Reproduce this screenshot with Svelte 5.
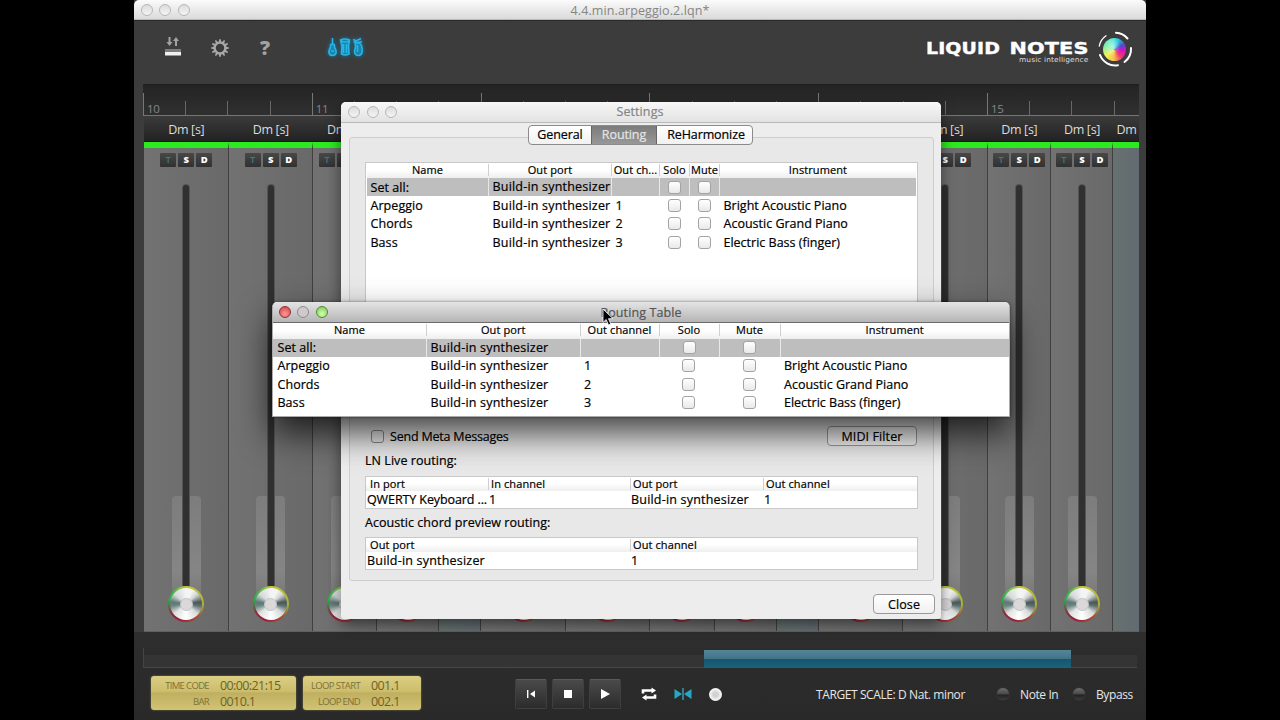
<script>
  const bars = [10, 11, 12, 13, 14, 15];

  // one entry per chord, w = width on the time line
  const chords = [
    { w: 84.5 }, { w: 84.5 }, { w: 64 }, { w: 61.5 }, { w: 42.5, rest: true },
    { w: 85 }, { w: 84 }, { w: 64.5 }, { w: 62 }, { w: 42.5, rest: true },
    { w: 84 }, { w: 84.5 }, { w: 63.5 }, { w: 62 }, { w: 27, rest: true, label: "Dm" },
  ];

  const columns = ["Name", "Out port", "Out channel", "Solo", "Mute", "Instrument"];
  const shortColumns = ["Name", "Out port", "Out ch...", "Solo", "Mute", "Instrument"];

  const tracks = [
    { name: "Set all:", channel: "", instrument: "", selected: true },
    { name: "Arpeggio", channel: "1", instrument: "Bright Acoustic Piano" },
    { name: "Chords", channel: "2", instrument: "Acoustic Grand Piano" },
    { name: "Bass", channel: "3", instrument: "Electric Bass (finger)" },
  ];

  const teeth = [0, 30, 60, 90, 120, 150, 180, 210, 240, 270, 300, 330];
</script>

{#snippet table(heads)}
  <div class="row head">
    {#each heads as head}<span>{head}</span>{/each}
  </div>
  {#each tracks as track}
    <div class="row" class:selected={track.selected}>
      <span>{track.name}</span>
      <span class="port">Build-in synthesizer</span>
      <span class="channel">{track.channel}</span>
      <span class="check"><i class="box"></i></span>
      <span class="check"><i class="box"></i></span>
      <span class="instrument">{track.instrument}</span>
    </div>
  {/each}
{/snippet}

<div class="desktop">
  <div class="app">
    <div class="titlebar main-title">
      <div class="lights"><i></i><i></i><i></i></div>
      4.4.min.arpeggio.2.lqn*
    </div>

    <header>
      <svg class="export" width="18" height="20" viewBox="0 0 18 20">
        <path d="M4.500 0h2v5h2l-3 4-3-4h2zM13 9h-2V4H9l3-4 3 4h-2z" fill="#a2a2a2" />
        <rect x="1" y="12" width="16" height="3" fill="#7c7c7c" />
        <rect x="1" y="15" width="16" height="3.500" fill="#f0f0f0" />
      </svg>
      <svg class="gear" width="18" height="18" viewBox="-9 -9 18 18">
        {#each teeth as angle}
          <path d="M-1.500 -5.500 -.5 -9h1L1.500 -5.500z" fill="#a8a8a8" transform="rotate({angle})" />
        {/each}
        <circle r="5.300" fill="none" stroke="#a8a8a8" stroke-width="2.200" />
      </svg>
      <span class="help">?</span>
      <svg class="band" width="36" height="20" viewBox="0 0 36 20">
        <g fill="#1686ae" stroke="#28b4e4" stroke-width="1.600" stroke-linejoin="round">
          <path d="M4.500 1v7M4.500 7c-2.500 0-2 2-2 3.500C-.2 14 .5 18.500 4.500 18.500S9.200 14 6.500 10.500C6.500 9 7 7 4.500 7zM3 14h3" />
          <path d="M12.500 3q4.500-2 9 0l-1 6 .5 8q-4 2-7.500 0l.5-8zM12.500 4q4.500 2 9 0M15.500 7v9M18.500 7v9" />
          <path d="M25 2.500l4 1.500M33 1.500l-4 2M25.500 4.500q4 2 8.500 0M27 6q1 3 0 6c-1 4 0 6.500 3.500 6.500s4-3.500 3.500-7.500-1.500-5-4-5zM29.500 8v7" />
        </g>
      </svg>
      <svg class="logo" width="210" height="42" viewBox="0 0 210 42">
        <text x="0" y="24" class="brand" textLength="74" lengthAdjust="spacingAndGlyphs">LIQUID</text>
        <text x="83.500" y="24" class="brand" textLength="79" lengthAdjust="spacingAndGlyphs">NOTES</text>
        <text x="93" y="32" class="motto" textLength="69.500" lengthAdjust="spacingAndGlyphs">music intelligence</text>
      </svg>
      <div class="disc">
        <svg width="36" height="36" viewBox="-18 -18 36 36">
          <g fill="none" stroke="#fff" stroke-linecap="round">
            <path d="M-15.700 -3A16 16 0 0 1 -9 -13.200" stroke-width="1.300" />
            <path d="M1 -16.200A16.300 16.300 0 0 1 12.500 -10.500" stroke-width="2" />
            <path d="M16 -1A16.200 16.200 0 0 1 9.500 13" stroke-width="2" />
            <path d="M3 16.200A16.200 16.200 0 0 1 -15 6" stroke-width="2" />
          </g>
        </svg>
        <i></i>
      </div>
    </header>

    <div class="ruler">
      {#each bars as bar}
        <div class="bar"><b>{bar}</b><i></i><i></i><i></i></div>
      {/each}
    </div>

    <div class="mixer">
      {#each chords as chord}
        <div class="strip" class:rest={chord.rest} style="width: {chord.w}px">
          <div class="chord">{chord.label ?? (chord.rest ? "" : "Dm [s]")}</div>
          <div class="lane">
            {#if !chord.rest}
              <div class="tsd"><b class="t">T</b><b>S</b><b>D</b></div>
              <div class="fader">
                <div class="range"></div>
                <div class="slot"></div>
                <div class="knob"><i></i></div>
              </div>
            {/if}
          </div>
        </div>
      {/each}
    </div>

    <div class="navigator"><div class="view"></div></div>

    <footer>
      <div class="lcd time">
        <small>TIME CODE</small><span>00:00:21:15</span>
        <small>BAR</small><span>0010.1</span>
      </div>
      <div class="lcd loop">
        <small>LOOP START</small><span>001.1</span>
        <small>LOOP END</small><span>002.1</span>
      </div>
      <div class="transport">
        <button aria-label="Rewind"><svg width="10" height="10"><path d="M1 1h1.400v8H1zM9 1.500v7L4 5z" fill="#fff" /></svg></button>
        <button aria-label="Stop"><svg width="10" height="10"><path d="M1 1h8v8H1z" fill="#fff" /></svg></button>
        <button aria-label="Play"><svg width="10" height="10"><path d="M1 0l9 5-9 5z" fill="#fff" /></svg></button>
      </div>
      <svg class="cycle" width="16" height="14" viewBox="0 0 16 14">
        <path d="M2 6.500V3.500H11M14 7.500v3H5" fill="none" stroke="#fff" stroke-width="2.600" />
        <path d="M10.500 .5v6l4.500-3zM5.500 7.500v6l-4.500-3z" fill="#fff" />
      </svg>
      <svg class="snap" width="18" height="14" viewBox="0 0 18 14">
        <path d="M.5 2 8 7 .5 12zM17.500 2 10 7l7.500 5z" fill="#27a7c4" />
        <path d="M9 1v12" stroke="#35b6d2" stroke-width="1.200" />
      </svg>
      <i class="record"></i>
      <span class="scale">TARGET SCALE: D Nat. minor</span>
      <i class="led"></i><span class="note-in">Note In</span>
      <i class="led"></i><span>Bypass</span>
    </footer>
  </div>

  <section class="window settings">
    <div class="titlebar">
      <div class="lights"><i></i><i></i><i></i></div>
      Settings
    </div>
    <div class="tabs">
      <span>General</span><span class="active">Routing</span><span>ReHarmonize</span>
    </div>
    <div class="panel">
      <div class="table tracks">{@render table(shortColumns)}</div>
      <div class="meta">
        <i class="box"></i><span>Send Meta Messages</span>
        <button class="aqua">MIDI Filter</button>
      </div>
      <p>LN Live routing:</p>
      <div class="table live">
        <div class="row head"><span>In port</span><span>In channel</span><span>Out port</span><span>Out channel</span></div>
        <div class="row"><span class="keyboard">QWERTY Keyboard ...</span><span>1</span><span class="port">Build-in synthesizer</span><span>1</span></div>
      </div>
      <p class="preview-label">Acoustic chord preview routing:</p>
      <div class="table live preview">
        <div class="row head"><span>Out port</span><span>Out channel</span></div>
        <div class="row"><span class="port">Build-in synthesizer</span><span>1</span></div>
      </div>
    </div>
    <button class="aqua close">Close</button>
  </section>

  <section class="window routing">
    <div class="titlebar">
      <div class="lights"><i></i><i></i><i></i></div>
      Routing Table
    </div>
    <div class="table tracks">{@render table(columns)}</div>
  </section>

  <svg class="cursor" width="13" height="19" viewBox="0 0 13 19">
    <path d="M1 1v13.500l3.200-3 2.300 5.500 2.300-1-2.300-5.300H11z" fill="#000" stroke="#fff" stroke-width=".8" />
  </svg>
</div>

<style>
  :global(body) {
    margin: 0;
    background: #000;
  }

  .desktop {
    position: relative;
    width: 1280px;
    height: 720px;
    overflow: hidden;
    background: #000;
    font-family: "Open Sans", "Noto Sans", sans-serif;
    font-size: 12.5px;
    letter-spacing: 0.1px;
    color: #000;
  }

  .desktop * {
    box-sizing: border-box;
  }

  .app {
    display: flex;
    flex-direction: column;
    width: 1012px;
    height: 720px;
    margin: 0 auto;
    background: linear-gradient(#3c3c3c 632px, #2e2e2e 632px, #292929);
  }

  .titlebar {
    display: flex;
    align-items: center;
    justify-content: center;
    height: 21px;
    flex: none;
    position: relative;
    color: #858585;
    background: linear-gradient(#f8f8f8, #e2e2e2);
    border-bottom: 1px solid #b9b9b9;
  }

  .main-title {
    height: 20px;
    padding-top: 2px;
    background: linear-gradient(#fbfbfb, #dadada);
    border-radius: 5px 5px 0 0;
  }

  .lights {
    position: absolute;
    top: 4px;
    left: 6.5px;
    display: flex;
    gap: 6.5px;
  }

  .lights i {
    width: 12px;
    height: 12px;
    border: 1.5px solid #b7b7b7;
    border-radius: 50%;
    background: linear-gradient(#dcdcdc, #f4f4f4);
  }

  header {
    display: flex;
    align-items: flex-start;
    height: 64px;
    flex: none;
    border-top: 1px solid #2a2a2a;
  }

  .export {
    margin: 16px 0 0 30px;
  }

  .gear {
    margin: 18px 0 0 28.5px;
  }

  .help {
    margin: 13px 0 0 31.5px;
    width: 12px;
    font-size: 20px;
    line-height: 27px;
    font-weight: 800;
    color: #a2a2a2;
  }

  .band {
    margin: 16px 0 0 56px;
    filter: drop-shadow(0 0 2px #0d7fae);
  }

  .logo {
    margin: 9px -38px 0 562px;
    flex: none;
  }

  .brand {
    fill: #fff;
    stroke: #fff;
    stroke-width: 0.4px;
    font: bold 16px "DejaVu Sans", sans-serif;
  }

  .motto {
    fill: #ddd;
    font: 7px "DejaVu Sans", sans-serif;
  }

  .disc {
    display: grid;
    place-items: center;
    margin: 10px 0 0 -1.5px;
    width: 36px;
    height: 36px;
    flex: none;
  }

  .disc > * {
    grid-area: 1 / 1;
  }

  .disc i {
    width: 23px;
    height: 23px;
    border-radius: 50%;
    background:
      radial-gradient(circle at 38% 38%, #fff8 0, #fff0 45%),
      conic-gradient(from 20deg, #2ec7e6, #4a50c8 40deg, #d810c0 75deg, #ee3a70 120deg, #f6c34a 165deg, #f2f25a 215deg, #64eca0 275deg, #55e8d0 330deg, #2ec7e6);
  }

  .ruler {
    display: flex;
    height: 32px;
    flex: none;
    margin: 0 7px 0 9px;
    overflow: hidden;
    padding-top: 8px;
    background: linear-gradient(#242424, #303030);
    border-bottom: 1px solid #757575;
    border-top: 1px solid #1d1d1d;
  }

  .bar {
    display: flex;
    align-items: flex-end;
    position: relative;
    width: 168.8px;
    flex: none;
    border-left: 1px solid #777;
  }

  .bar b {
    position: absolute;
    left: 3px;
    top: 8px;
    font-size: 11.5px;
    line-height: 16px;
    font-weight: 400;
    letter-spacing: -0.3px;
    color: #868686;
  }

  .bar i {
    width: 42.2px;
    height: 14px;
    border-right: 1px solid #686868;
  }

  .mixer {
    display: flex;
    height: 516px;
    flex: none;
    margin: 0 7px 0 10px;
    overflow: hidden;
    border-bottom: 1px solid #606060;
  }

  .strip {
    display: flex;
    flex-direction: column;
    flex: none;
  }

  .chord {
    height: 26px;
    flex: none;
    line-height: 27px;
    text-align: center;
    color: #dcdcdc;
    background: linear-gradient(#3b3b3b, #222);
    border-bottom: 1px solid #161616;
    letter-spacing: -0.3px;
  }

  .lane {
    display: flex;
    flex-direction: column;
    align-items: center;
    flex: 1;
    padding: 5px 0 0 1px;
    border-top: 6px solid #2bea20;
    border-right: 1px solid #404040;
    background: linear-gradient(90deg, #727272, #696969);
  }

  .rest .lane {
    background: linear-gradient(90deg, #66716f, #626b72);
  }

  .tsd {
    display: flex;
    gap: 2px;
  }

  .tsd b {
    width: 16px;
    height: 14px;
    font-size: 9.5px;
    line-height: 13px;
    font-weight: 800;
    text-align: center;
    color: #fff;
    background: linear-gradient(#484848, #313131);
    border-radius: 1px;
  }

  .tsd .t {
    color: #397a7c;
    font-weight: 600;
  }

  .fader {
    display: grid;
    justify-items: center;
    grid-template-rows: 311px 90px 36px;
    width: 36px;
    margin-top: 18px;
  }

  .slot {
    grid-area: 1 / 1 / 3 / 2;
    width: 6px;
    background: #303030;
    border-radius: 3px 3px 0 0;
    box-shadow: 0 0 0 1px #555;
  }

  .range {
    grid-area: 2 / 1 / 4 / 2;
    width: 29px;
    height: 108px;
    border-radius: 4px 4px 0 0;
    background: linear-gradient(#7d7d7d, #858585 70%, #747474);
  }

  .knob {
    grid-area: 3 / 1;
    display: grid;
    place-items: center;
    width: 36px;
    height: 36px;
    border-radius: 50%;
    background:
      conic-gradient(from 0deg, #f4f4f4 0 25deg, #d0d4d3 50deg, #4a5658 82deg, #5c7070 98deg, #d9dcdc 130deg, #fff 180deg, #dfe3e2 230deg, #6c8480 262deg, #5d7876 278deg, #d5d9d8 310deg, #f4f4f4) padding-box,
      conic-gradient(#c3c83b, #a8b43a 90deg, #a35334 135deg, #9c2038 200deg, #8a2c3c 240deg, #2ca844 280deg, #3cb94a 310deg, #c3c83b) border-box;
    border: 2px solid transparent;
  }

  .knob i {
    width: 13px;
    height: 13px;
    border-radius: 50%;
    background: #dcd8da;
    border: 1px solid #bfc6c5;
  }

  .navigator {
    height: 20px;
    flex: none;
    margin: 16px 9px 0;
    padding: 2px 0 0 560px;
    border-bottom: 1px solid #484848;
    border-left: 1px solid #444;
    background: linear-gradient(#2d2d2d 35%, #343434 36%);
  }

  .view {
    width: 367px;
    height: 18px;
    background: linear-gradient(#568698, #417487 48%, #155771 52%, #1e617b);
  }

  footer {
    display: flex;
    align-items: center;
    height: 52px;
    color: #e6e6e6;
    font-size: 12px;
    letter-spacing: -0.4px;
    padding-left: 17px;
    white-space: nowrap;
  }

  .lcd {
    display: grid;
    grid-template-rows: 16px 16px;
    align-items: center;
    justify-items: end;
    height: 34px;
    margin-top: -2px;
    padding-top: 1px;
    border-radius: 3px;
    background: linear-gradient(#dccf83, #cdbd6c 45%, #c0af60 50%, #d2c475);
    box-shadow: 0 0 2px #8d8145;
    color: #6d6226;
  }

  .lcd small {
    font-size: 9.5px;
    color: #7d7137;
    letter-spacing: -0.65px;
  }

  .lcd span {
    justify-self: start;
    font-size: 12.5px;
    line-height: 15px;
    letter-spacing: -0.6px;
  }

  .time {
    width: 145px;
    grid-template-columns: 58px 1fr;
    column-gap: 11px;
  }

  .loop {
    width: 118px;
    margin-left: 7px;
    grid-template-columns: 57px 1fr;
    column-gap: 11px;
  }

  .transport {
    display: flex;
    gap: 5px;
    margin-left: 94px;
  }

  .transport button {
    display: grid;
    place-items: center;
    width: 32px;
    height: 30px;
    padding: 0;
    border: 1px solid #3f3f3f;
    border-top-color: #5a5a5a;
    border-radius: 2px;
    background: linear-gradient(#4a4a4a, #2c2c2c);
  }

  .cycle {
    margin-left: 20px;
  }

  .snap {
    margin-left: 17px;
  }

  .record {
    width: 13px;
    height: 13px;
    margin-left: 17px;
    border-radius: 50%;
    background: radial-gradient(#d2d2d2 25%, #f4f4f4 60%);
  }

  .scale {
    width: 149px;
    margin-left: 94px;
  }

  .led {
    width: 12px;
    height: 12px;
    margin: 0 11px 0 32px;
    border-radius: 50%;
    background: linear-gradient(#6c6c6c, #4d4d4d 45%, #242424 60%, #3c3c3c);
    box-shadow: 0 0 1px #666;
  }

  .note-in {
    width: 37px;
  }

  .note-in + .led {
    margin-left: 16px;
  }

  .window {
    position: absolute;
    background: #ededed;
    border-radius: 5px 5px 0 0;
    /* Lucida-like weight */
    -webkit-text-stroke: 0.2px;
  }

  .settings {
    isolation: isolate;
    left: 341px;
    top: 102px;
    width: 600px;
    height: 517px;
    border-radius: 5px 5px 3px 3px;
    box-shadow: 0 5px 14px rgba(0, 0, 0, 0.5);
  }

  .window .titlebar {
    border-radius: 5px 5px 0 0;
    padding: 0 2px 1px 0;
  }

  .settings .lights {
    left: 7px;
  }

  .tabs {
    display: flex;
    justify-content: center;
    width: 225px;
    height: 20px;
    margin: 2px 0 0 187px;
    position: relative;
    border: 1px solid #8b8b8b;
    border-radius: 4px;
    overflow: hidden;
    background: linear-gradient(#fff, #f1f1f1);
    z-index: 1;
  }

  .tabs span {
    width: 62px;
    line-height: 18px;
    text-align: center;
    letter-spacing: -0.1px;
  }

  .tabs .active {
    width: 66px;
    color: #e5e5e5;
    background: linear-gradient(#7b7b7b, #989898);
    border-left: 1px solid #666;
    border-right: 1px solid #666;
  }

  .tabs span:last-child {
    flex: 1;
    padding-left: 3px;
  }

  .panel {
    height: 444px;
    margin: -8px 7px 0 8px;
    padding: 24px 15px 0 15px;
    background: #e8e8e8;
    border: 1px solid #cecece;
    border-radius: 3px;
  }

  .table {
    background: #fff;
    letter-spacing: 0.05px;
    white-space: nowrap;
  }

  .row {
    display: grid;
    align-items: center;
    height: 18.5px;
  }

  .row span {
    padding-left: 4.5px;
    line-height: 17px;
  }

  .row .port {
    letter-spacing: 0.2px;
  }

  .row .instrument {
    letter-spacing: 0;
  }

  .row.head {
    font-size: 11px;
    letter-spacing: 0.1px;
    background: linear-gradient(#fff 45%, #eee);
    padding-bottom: 2px;
  }

  .row.head span {
    line-height: 12px;
  }

  .tracks .head span {
    text-align: center;
    padding: 0;
  }

  .row.head span + span {
    border-left: 1px solid #d0d0d0;
  }

  .selected {
    height: 18px;
    background: #bebebe;
  }

  .selected span + span {
    height: 100%;
    border-left: 1px solid #e8e8e8;
    padding-left: 3.5px;
  }

  .row .check {
    display: grid;
    place-items: center;
    padding: 0;
  }

  .box {
    width: 13px;
    height: 13px;
    border: 1px solid #a3a3a3;
    border-radius: 3px;
    background: linear-gradient(#fff, #e9e9e9);
  }

  .settings .tracks {
    height: 248px;
    padding: 0 1px;
    border: 1px solid #c8c8c8;
  }

  .settings .tracks .row {
    grid-template-columns: 121px 123px 48px 30px 30px 1fr;
  }

  .settings .tracks .row:not(.head) span:first-child {
    padding-left: 3.5px;
  }

  .settings .tracks .head {
    height: 15px;
  }

  .meta {
    display: flex;
    align-items: center;
    height: 22px;
    margin: 15px 0 0 6px;
    letter-spacing: -0.2px;
  }

  .meta .box {
    background: transparent;
    border-color: #888;
    margin-right: 6px;
  }

  .aqua {
    padding: 0;
    height: 20px;
    font: inherit;
    letter-spacing: 0.1px;
    color: #000;
    border: 1px solid #999;
    border-radius: 4px;
    background: linear-gradient(#fff, #f0f0f0);
  }

  .meta .aqua {
    width: 90px;
    margin: 0 1px 0 auto;
    background: #f4f4f4;
  }

  p {
    margin: 5px 0 6px;
    line-height: 18px;
    letter-spacing: 0.05px;
  }

  .live {
    height: 33px;
    border: 1px solid #c8c8c8;
  }

  .live .row {
    grid-template-columns: 122px 142px 133px 1fr;
    height: 15.5px;
  }

  .live .row.head {
    height: 14px;
    padding-bottom: 1px;
  }

  .live .row span {
    padding-left: 1px;
  }

  .row .keyboard {
    letter-spacing: -0.1px;
  }

  .live .row.head span:first-child {
    padding-left: 4px;
  }

  .live .row.head span + span {
    padding-left: 2px;
  }

  .preview .row {
    grid-template-columns: 264px 1fr;
  }

  p.preview-label {
    margin: 5px 0;
  }

  .close {
    display: block;
    width: 62px;
    margin: 13px 0 0 532px;
  }

  .routing {
    left: 272px;
    top: 302px;
    width: 738px;
    height: 115px;
    background: #fff;
    border: 1px solid #aaa;
    border-top: 0;
    box-shadow: 0 16px 34px rgba(0, 0, 0, 0.72), 0 0 3px rgba(0, 0, 0, 0.5);
  }

  .routing .titlebar {
    color: #555;
    background: linear-gradient(#e4e4e4, #b5b5b5);
    border-bottom-color: #6c6c6c;
    padding: 0;
  }

  .routing .lights {
    left: 5.5px;
  }

  .routing .tracks .row {
    grid-template-columns: 153px 153.5px 79px 60px 61px 1fr;
  }

  .routing .tracks .head {
    height: 16px;
  }

  .routing .selected {
    height: 17.5px;
  }

  .routing .lights i {
    border-color: #8f8a8e;
    background: #cfc9cc;
  }

  .routing .lights i:first-child {
    border-color: #8c3034;
    background: radial-gradient(circle at 50% 70%, #ff9a96, #d33a42);
  }

  .routing .lights i:last-child {
    border-color: #4f8a3a;
    background: radial-gradient(circle at 50% 70%, #d6ffac, #76c652);
  }

  .cursor {
    position: absolute;
    left: 602px;
    top: 308px;
  }
</style>
